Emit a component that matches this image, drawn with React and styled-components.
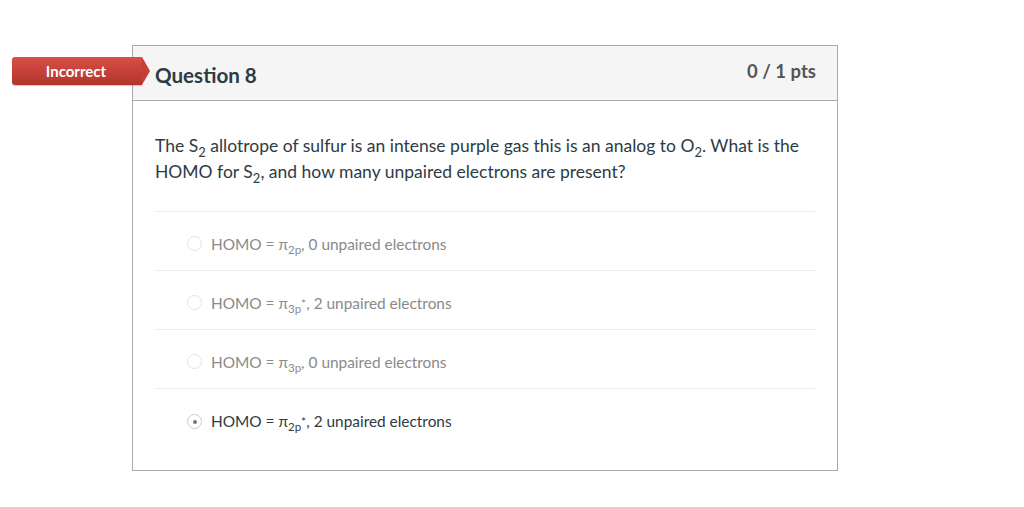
import React from "react";
import styled, { createGlobalStyle } from "styled-components";

const GlobalStyle = createGlobalStyle`
  html, body {
    margin: 0;
    padding: 0;
    background: #ffffff;
    font-family: Lato, "Open Sans", sans-serif;
    color: #2d3b45;
  }
`;

const answers = [
  { sub: "2p", star: false, rest: ", 0 unpaired electrons", selected: false },
  { sub: "3p", star: true, rest: ", 2 unpaired electrons", selected: false },
  { sub: "3p", star: false, rest: ", 0 unpaired electrons", selected: false },
  { sub: "2p", star: true, rest: ", 2 unpaired electrons", selected: true },
];

export default function App() {
  return (
    <Page>
      <GlobalStyle />
      <Card>
        <Badge>Incorrect</Badge>
        <Header>
          <Title>Question 8</Title>
          <Points>0 / 1 pts</Points>
        </Header>
        <Body>
          <QuestionText>
            The S<sub>2</sub> allotrope of sulfur is an intense purple gas this
            is an analog to O<sub>2</sub>. What is the HOMO for S<sub>2</sub>,
            and how many unpaired electrons are present?
          </QuestionText>
          <AnswerList>
            {answers.map((a, i) => (
              <Answer key={i}>
                <Radio selected={a.selected} />
                <AnswerText selected={a.selected}>
                  HOMO = π<sub>{a.sub}</sub>
                  {a.star && <sup>*</sup>}
                  {a.rest}
                </AnswerText>
              </Answer>
            ))}
          </AnswerList>
        </Body>
      </Card>
    </Page>
  );
}

const Page = styled.div`
  padding: 45px 0 0 132px;
  min-height: 100vh;
  box-sizing: border-box;
`;

const Card = styled.div`
  position: relative;
  width: 706px;
  height: 426px;
  box-sizing: border-box;
  border: 1px solid #aaaaaa;
  background: #ffffff;
`;

const Badge = styled.div`
  position: absolute;
  left: -121px;
  top: 11px;
  width: 130px;
  height: 28px;
  box-sizing: border-box;
  padding-right: 2px;
  display: flex;
  align-items: center;
  justify-content: center;
  color: #ffffff;
  font-weight: 700;
  font-size: 15px;
  background: linear-gradient(#d94f45, #b3342c);
  border-radius: 3px 0 0 3px;
  box-shadow: 0 1px 1px rgba(0, 0, 0, 0.2);

  &::after {
    content: "";
    position: absolute;
    right: -8px;
    top: 0;
    border-top: 14px solid transparent;
    border-bottom: 14px solid transparent;
    border-left: 8px solid #c53f36;
  }
`;

const Header = styled.div`
  height: 55px;
  box-sizing: border-box;
  background: #f5f5f5;
  border-bottom: 1px solid #aaaaaa;
  display: flex;
  justify-content: space-between;
  padding: 0 21px 0 22px;
`;

const Title = styled.div`
  font-size: 20.6px;
  font-weight: 700;
  color: #2d3b45;
  margin-top: 17px;
`;

const Points = styled.div`
  font-size: 18.5px;
  font-weight: 700;
  color: #555555;
  margin-top: 14px;
`;

const Body = styled.div`
  padding: 32px 22px 0 22px;
`;

const QuestionText = styled.div`
  font-size: 17.5px;
  line-height: 26px;
  color: #2d3b45;
  padding-bottom: 26px;
  border-bottom: 1px solid #ebebeb;

  sub {
    font-size: 13px;
    line-height: 0;
  }
`;

const AnswerList = styled.div`
  display: flex;
  flex-direction: column;
`;

const Answer = styled.div`
  display: flex;
  align-items: center;
  height: 59px;
  box-sizing: border-box;
  padding: 5px 0 0 32px;
  border-bottom: 1px solid #ebebeb;

  &:last-child {
    border-bottom: none;
  }
`;

const Radio = styled.span`
  width: 13px;
  height: 13px;
  border-radius: 50%;
  border: 1px solid ${({ selected }) => (selected ? "#cccccc" : "#e3e3e3")};
  background: #ffffff;
  margin-right: 9px;
  position: relative;

  &::after {
    content: "";
    display: ${({ selected }) => (selected ? "block" : "none")};
    position: absolute;
    left: 5px;
    top: 5px;
    width: 4px;
    height: 4px;
    border-radius: 50%;
    background: #777777;
  }
`;

const AnswerText = styled.span`
  font-size: 15.4px;
  color: ${({ selected }) => (selected ? "#2d3b45" : "#8a8a8a")};

  sub {
    font-size: 11.5px;
    line-height: 0;
  }

  sup {
    font-size: 12px;
    line-height: 0;
    vertical-align: 1px;
  }
`;
